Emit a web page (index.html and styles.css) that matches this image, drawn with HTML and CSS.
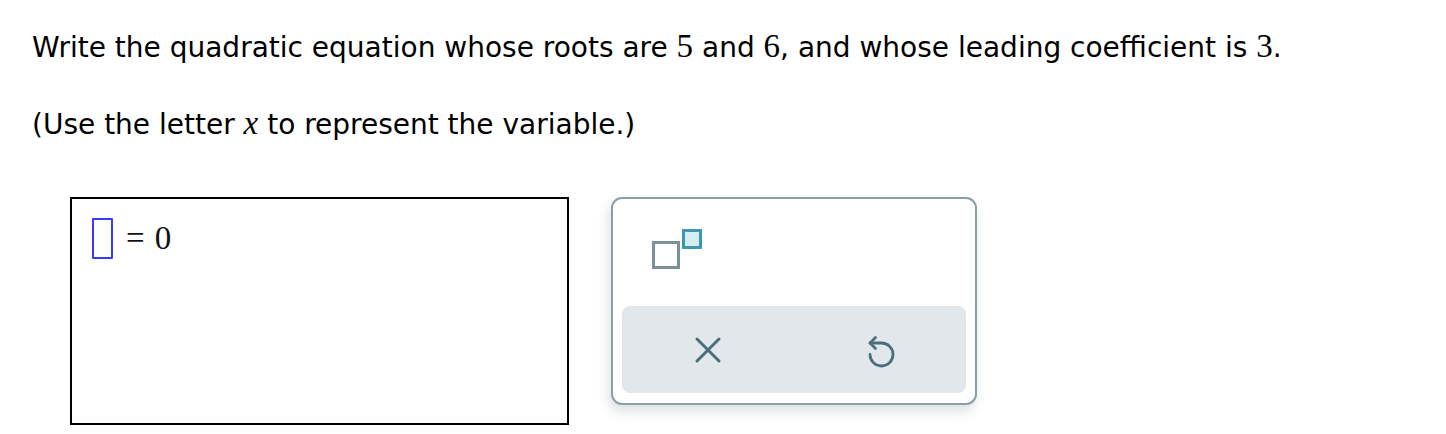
FILE: index.html
```html
<!DOCTYPE html>
<html>
<head>
<meta charset="utf-8">
<link rel="stylesheet" href="styles.css">
</head>
<body>
<div class="page">
  <p class="q q1">Write the quadratic equation whose roots are <span class="m">5</span> and <span class="m">6</span>, and whose leading coefficient is <span class="m">3</span>.</p>
  <p class="q q2">(Use the letter <span class="m mi">x</span> to represent the variable.)</p>
  <div class="work">
    <div class="answer">
      <span class="slot"></span>
      <span class="eq">= 0</span>
    </div>
    <div class="palette">
      <div class="tools">
        <button class="tool" aria-label="exponent">
          <svg width="54" height="44" viewBox="0 0 54 44">
            <rect x="1.5" y="13.5" width="25" height="25" fill="#fff" stroke="#7b9199" stroke-width="3"/>
            <rect x="31.5" y="1.5" width="17" height="17" fill="#d5eef4" stroke="#3f98b0" stroke-width="3"/>
          </svg>
        </button>
      </div>
      <div class="bar">
        <button class="act" aria-label="clear">
          <svg width="30" height="30" viewBox="0 0 30 30">
            <path d="M4 4 L26 26 M26 4 L4 26" stroke="#4b6e7c" stroke-width="3" stroke-linecap="round" fill="none"/>
          </svg>
        </button>
        <button class="act" aria-label="undo">
          <svg width="30" height="38" viewBox="0 0 30 38">
            <path d="M5 12 H16.5 A11.5 11.5 0 1 1 5 23.5" stroke="#4b6e7c" stroke-width="2.8" stroke-linecap="round" fill="none"/>
            <path d="M10.5 6.5 L5 12 L10.5 17.5" stroke="#4b6e7c" stroke-width="2.8" stroke-linecap="round" stroke-linejoin="round" fill="none"/>
          </svg>
        </button>
      </div>
    </div>
  </div>
</div>
</body>
</html>
```
FILE: styles.css
```css
html, body {
  margin: 0;
  padding: 0;
  background: #fff;
}
.page {
  padding: 30px 0 0 32px;
  font-family: "DejaVu Sans", Verdana, sans-serif;
  color: #000;
}
.q {
  margin: 0;
  font-size: 28px;
  line-height: 36px;
  white-space: nowrap;
}
.q2 {
  margin-top: 41px;
}
.m {
  font-family: "Liberation Serif", "Times New Roman", serif;
  font-size: 33px;
  line-height: 20px;
}
.mi {
  font-style: italic;
}
.work {
  display: flex;
  align-items: flex-start;
  margin-top: 54px;
  margin-left: 38px;
  gap: 42px;
}
.answer {
  box-sizing: border-box;
  width: 499px;
  height: 228px;
  border: 2px solid #000;
  padding: 19px 0 0 20px;
  display: flex;
  align-items: flex-start;
}
.slot {
  box-sizing: border-box;
  width: 21px;
  height: 41px;
  border: 2px solid #3a3aff;
  border-radius: 1px;
}
.eq {
  font-family: "Liberation Serif", "Times New Roman", serif;
  font-size: 33px;
  line-height: 41px;
  margin-left: 13px;
  color: #111;
  word-spacing: 2px;
}
.palette {
  box-sizing: border-box;
  width: 366px;
  height: 208px;
  border: 2px solid #8a9fa8;
  border-radius: 11px;
  background: #fff;
  box-shadow: -2px 6px 12px rgba(40, 60, 70, 0.16);
  display: flex;
  flex-direction: column;
  padding: 0 9px 10px 9px;
}
.tools {
  flex: 1;
  display: flex;
  align-items: flex-start;
  padding: 30px 0 0 30px;
}
button {
  border: 0;
  background: none;
  padding: 0;
  margin: 0;
  cursor: pointer;
}
.tool svg {
  display: block;
}
.bar {
  height: 87px;
  background: #e1e7ea;
  border-radius: 8px;
  display: grid;
  grid-template-columns: 1fr 1fr;
  align-items: center;
}
.act {
  display: flex;
  justify-content: center;
  align-items: center;
  height: 100%;
}
.act svg {
  display: block;
}
```
